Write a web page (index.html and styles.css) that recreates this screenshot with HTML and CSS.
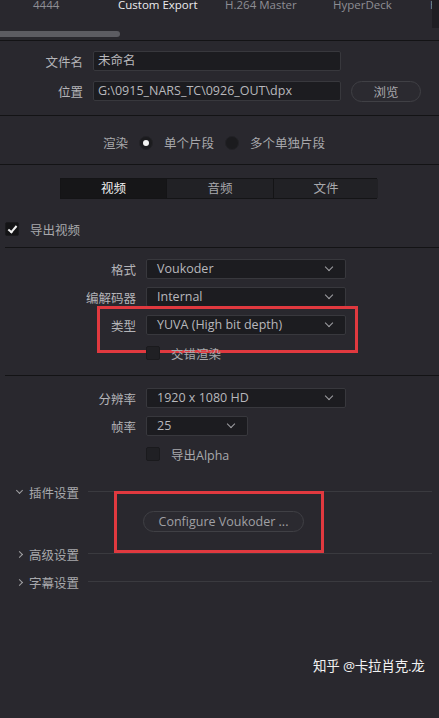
FILE: index.html
```html
<!DOCTYPE html>
<html lang="zh">
<head>
    <meta charset="UTF-8">
    <meta name="viewport" content="width=device-width, initial-scale=1.0">
    <title>Render Settings</title>
    <link rel="stylesheet" href="styles.css">
</head>
<body>
    <div class="tabs">
        <span class="tab t1">4444</span>
        <span class="tab t2 active">Custom Export</span>
        <span class="tab t3">H.264 Master</span>
        <span class="tab t4">HyperDeck</span>
        <span class="tab t5">H</span>
    </div>
    <div class="scrollbar"></div>
    <div class="sep"></div>

    <div class="file-section">
        <div class="row">
            <label class="lbl">文件名</label>
            <div class="input">未命名</div>
        </div>
        <div class="row">
            <label class="lbl">位置</label>
            <div class="input">G:\0915_NARS_TC\0926_OUT\dpx</div>
            <button class="pill browse">浏览</button>
        </div>
    </div>
    <div class="sep"></div>

    <div class="render-row">
        <span>渲染</span>
        <span class="radio on"></span>
        <span>单个片段</span>
        <span class="radio"></span>
        <span>多个单独片段</span>
    </div>
    <div class="sep"></div>

    <div class="segments">
        <div class="seg active">视频</div>
        <div class="seg">音频</div>
        <div class="seg">文件</div>
    </div>

    <div class="export-video">
        <span class="check on"></span>
        <span>导出视频</span>
    </div>
    <div class="sep indent"></div>

    <div class="video-section">
        <div class="row">
            <label class="lbl">格式</label>
            <div class="select">Voukoder<span class="chev"></span></div>
        </div>
        <div class="row">
            <label class="lbl">编解码器</label>
            <div class="select">Internal<span class="chev"></span></div>
        </div>
        <div class="row">
            <label class="lbl">类型</label>
            <div class="select">YUVA (High bit depth)<span class="chev"></span></div>
            <div class="redbox box1"></div>
        </div>
        <div class="row">
            <span class="lbl"></span>
            <div class="check-line"><span class="check"></span><span>交错渲染</span></div>
        </div>
    </div>
    <div class="sep indent"></div>

    <div class="video-section second">
        <div class="row">
            <label class="lbl">分辨率</label>
            <div class="select">1920 x 1080 HD<span class="chev"></span></div>
        </div>
        <div class="row">
            <label class="lbl">帧率</label>
            <div class="select short">25<span class="chev"></span></div>
        </div>
        <div class="row">
            <span class="lbl"></span>
            <div class="check-line"><span class="check"></span><span>导出Alpha</span></div>
        </div>
    </div>

    <div class="group open">
        <div class="group-head"><span class="arrow down"></span><span>插件设置</span><span class="line"></span></div>
        <div class="group-body">
            <button class="pill configure">Configure Voukoder ...</button>
            <div class="redbox box2"></div>
        </div>
    </div>
    <div class="group">
        <div class="group-head"><span class="arrow"></span><span>高级设置</span><span class="line"></span></div>
    </div>
    <div class="group">
        <div class="group-head"><span class="arrow"></span><span>字幕设置</span><span class="line"></span></div>
    </div>

    <div class="watermark">知乎 @卡拉肖克.龙</div>
</body>
</html>
```

FILE: styles.css
```css
body {
    margin: 0;
    height: 718px;
    overflow: hidden;
    background: #29282e;
    color: #b4b4b8;
    font-family: "Open Sans", "Noto Sans CJK SC", sans-serif;
    font-size: 12.5px;
    position: relative;
}
.tabs {
    height: 28px;
    display: flex;
    overflow: hidden;
    position: relative;
}
.tabs::after {
    content: "";
    position: absolute;
    right: 0;
    top: 0;
    width: 7px;
    height: 28px;
    background: #1f1e23;
}
.tab {
    margin-top: -4px;
    line-height: 18px;
    font-size: 11.5px;
    color: #8e8e94;
    white-space: nowrap;
}
.tab.active {
    color: #ececee;
}
.t1 { margin-left: 33px; width: 85px; }
.t2 { width: 107px; }
.t3 { width: 108px; }
.t4 { width: 97px; }
.scrollbar {
    margin-top: 3px;
    width: 120px;
    height: 6px;
    border-radius: 0 3px 3px 0;
    background: #5c5c62;
}
.sep {
    height: 1px;
    background: #131315;
    margin-top: 3px;
}
.sep.indent {
    margin-left: 5px;
}
.row {
    display: flex;
    align-items: center;
    height: 20px;
    position: relative;
}
.lbl {
    text-align: right;
    padding-right: 10px;
    flex: none;
    color: #b4b4b8;
}
.file-section {
    padding: 10px 0 11px;
    display: flex;
    flex-direction: column;
    gap: 10px;
}
.file-section .lbl {
    width: 83px;
}
.input {
    width: 242px;
    height: 18px;
    line-height: 18px;
    padding-left: 4px;
    background: #1c1c20;
    border: 1px solid #38383d;
    border-radius: 2px;
    color: #b8b8bc;
    white-space: nowrap;
    overflow: hidden;
}
.pill {
    font-family: inherit;
    font-size: 12.5px;
    color: #a8a8ac;
    background: #2b2a30;
    border: 1px solid #404045;
    border-radius: 11px;
    height: 21px;
    padding: 0;
}
.browse {
    width: 70px;
    margin-left: 10px;
}
.render-row {
    display: flex;
    align-items: center;
    height: 37px;
    padding: 8px 0 0 103px;
    gap: 11px;
    color: #a8a8ac;
}
.radio {
    width: 14px;
    height: 14px;
    border-radius: 50%;
    background: #1b1b1e;
    border: 1px solid #222226;
    box-sizing: border-box;
    position: relative;
}
.radio.on::after {
    content: "";
    position: absolute;
    left: 3px;
    top: 3px;
    width: 6px;
    height: 6px;
    border-radius: 50%;
    background: #f4f4f4;
}
.segments {
    display: grid;
    grid-template-columns: 105px 107px 105px;
    margin: 13px 0 0 60px;
    width: 317px;
    height: 21px;
    border: 1px solid #141416;
    box-sizing: border-box;
}
.seg {
    text-align: center;
    line-height: 19px;
    background: #212125;
    color: #a8a8ac;
    border-left: 1px solid #141416;
}
.seg.active {
    background: #161618;
    color: #f2f2f2;
    border-left: none;
}
.export-video {
    display: flex;
    align-items: center;
    gap: 11px;
    margin: 22px 0 10px;
    padding-left: 5px;
    height: 16px;
    color: #a8a8ac;
}
.check {
    width: 14px;
    height: 14px;
    box-sizing: border-box;
    background: #202024;
    border: 1px solid #1a1a1d;
    border-radius: 2px;
    position: relative;
    flex: none;
}
.check.on {
    background: #141416;
}
.check.on::after {
    content: "";
    position: absolute;
    left: 4px;
    top: 1px;
    width: 3px;
    height: 7px;
    border: solid #f4f4f4;
    border-width: 0 2px 2px 0;
    transform: rotate(40deg);
}
.video-section {
    padding: 11px 0 9px;
    display: flex;
    flex-direction: column;
    gap: 8px;
}
.video-section.second {
    padding: 12px 0 0;
}
.video-section .lbl {
    width: 136px;
}
.select {
    width: 188px;
    height: 18px;
    line-height: 18px;
    padding-left: 10px;
    background: #1c1c20;
    border: 1px solid #38383d;
    border-radius: 2px;
    color: #b8b8bc;
    position: relative;
    white-space: nowrap;
}
.select.short {
    width: 90px;
}
.chev {
    position: absolute;
    right: 13px;
    top: 4px;
    width: 5px;
    height: 5px;
    border: solid #a0a0a4;
    border-width: 0 1.5px 1.5px 0;
    transform: rotate(45deg);
}
.check-line {
    display: flex;
    align-items: center;
    gap: 11px;
    color: #a8a8ac;
}
.redbox {
    position: absolute;
    border: 3px solid #e0393f;
    box-sizing: border-box;
    pointer-events: none;
}
.box1 {
    left: 97px;
    top: -9px;
    width: 261px;
    height: 47px;
}
.group {
    position: relative;
}
.group.open {
    margin-top: 19px;
}
.group-head {
    display: flex;
    align-items: center;
    height: 18px;
    padding-left: 17px;
    gap: 7px;
    color: #a8a8ac;
    margin-bottom: 10px;
}
.group-head .line {
    flex: 1;
    height: 1px;
    background: #3a3a3f;
    margin: 0 7px 2px 2px;
}
.arrow {
    width: 4px;
    height: 4px;
    border: solid #a0a0a4;
    border-width: 0 1.5px 1.5px 0;
    transform: rotate(-45deg);
}
.arrow.down {
    transform: rotate(45deg);
    margin-top: -3px;
}
.group-body {
    position: relative;
    padding: 0 0 13px 143px;
}
.configure {
    width: 161px;
    color: #a0a0a4;
}
.box2 {
    left: 114px;
    top: -20px;
    width: 210px;
    height: 62px;
}
.watermark {
    position: absolute;
    left: 313px;
    top: 655px;
    color: #f2f2f2;
    font-size: 13.5px;
    letter-spacing: -0.2px;
}
```
